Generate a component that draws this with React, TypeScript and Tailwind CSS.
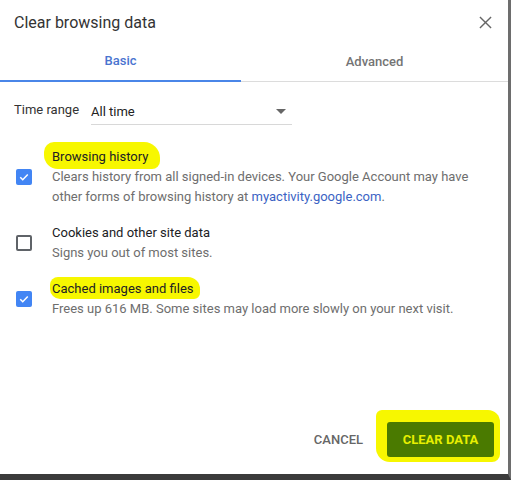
import React from "react";

const font = { fontFamily: "Roboto, 'Liberation Sans', sans-serif" };

const Check = ({ checked }: { checked: boolean }) =>
  checked ? (
    <div className="w-4 h-4 rounded-[2px] bg-[#4285f4] flex items-center justify-center">
      <svg width="12" height="12" viewBox="0 0 24 24">
        <path d="M4.5 12.5l5 5L19.5 7" fill="none" stroke="white" strokeWidth="3" />
      </svg>
    </div>
  ) : (
    <div className="w-4 h-4 rounded-[2px] border-2 border-[#5f6368]" />
  );

const Marker = ({ className }: { className: string }) => (
  <div className={`absolute bg-[#f7f700] ${className}`} />
);

const Item = ({
  checked,
  title,
  children,
  highlight,
}: {
  checked: boolean;
  title: string;
  children: React.ReactNode;
  highlight?: string;
}) => (
  <div className="flex items-center">
    <div className="w-[52px] pl-4 shrink-0">
      <Check checked={checked} />
    </div>
    <div className="relative">
      {highlight && <Marker className={highlight} />}
      <div className="relative text-[13px] leading-5 text-[#202124]">{title}</div>
      <div className="relative text-[13px] leading-5 text-[#6e6e6e]">{children}</div>
    </div>
  </div>
);

export default function App() {
  return (
    <div
      className="w-[511px] h-[480px] bg-white border-r-[3px] border-r-[#6d6d6d] border-b-[6px] border-b-[#3b3b3b] flex flex-col"
      style={font}
    >
      <div className="h-[45px] flex items-center justify-between pl-[14px] pr-[16px]">
        <div className="text-[16px] text-[#333]">Clear browsing data</div>
        <svg width="13" height="13" viewBox="0 0 14 14">
          <path d="M1 1L13 13M13 1L1 13" stroke="#666" strokeWidth="1.5" />
        </svg>
      </div>

      <div className="flex h-[37px] border-b border-[#dcdcdc]">
        <div className="w-[241px] flex items-center justify-center pb-[3px] text-[13px] font-medium text-[#4a74d0] border-b-2 border-[#4a86e8] -mb-px">
          Basic
        </div>
        <div className="flex-1 flex items-center justify-center pb-[3px] text-[13px] font-medium text-[#747474]">
          Advanced
        </div>
      </div>

      <div className="flex items-center h-[40px] mt-[8px] pl-[14px]">
        <div className="text-[13px] text-[#333] w-[77px]">Time range</div>
        <div className="w-[201px] h-[26px] flex items-center justify-between border-b border-[#d8d8d8] mt-[4px]">
          <span className="text-[13px] text-[#222]">All time</span>
          <svg width="10" height="5" viewBox="0 0 10 5" className="mr-[6px]">
            <path d="M0 0h10L5 5z" fill="#666" />
          </svg>
        </div>
      </div>

      <div className="mt-[17px] flex flex-col gap-[16px]">
        <Item
          checked
          title="Browsing history"
          highlight="-left-2 w-[116px] h-[27px] -top-[5px] rounded-[10px_16px_8px_14px]"
        >
          Clears history from all signed-in devices. Your Google Account may have
          <br />
          other forms of browsing history at{" "}
          <span className="text-[#3b63c4]">myactivity.google.com</span>.
        </Item>
        <Item checked={false} title="Cookies and other site data">
          Signs you out of most sites.
        </Item>
        <Item
          checked
          title="Cached images and files"
          highlight="-left-[2px] w-[150px] h-[22px] -top-[2px] rounded-[8px_12px_6px_10px]"
        >
          Frees up 616 MB. Some sites may load more slowly on your next visit.
        </Item>
      </div>

      <div className="flex-1" />

      <div className="flex items-center justify-end pr-[14px] pb-[17px] gap-[24px]">
        <div className="text-[13px] font-medium text-[#666]">CANCEL</div>
        <div className="relative">
          <Marker className="-left-[11px] -right-[6px] -top-[12px] -bottom-[5px] rounded-[6px_12px_8px_14px]" />
          <div className="relative w-[107px] h-[35px] rounded-[3px] bg-[#4a7a00] flex items-center justify-center text-[13px] font-bold text-[#e8f000]">
            CLEAR DATA
          </div>
        </div>
      </div>
    </div>
  );
}
